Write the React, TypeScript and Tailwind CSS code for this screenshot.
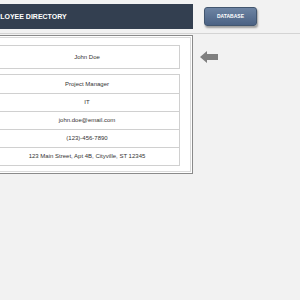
import React from "react";

const details = [
  "Project Manager",
  "IT",
  "john.doe@email.com",
  "(123)-456-7890",
  "123 Main Street, Apt 4B, Cityville, ST 12345",
];

function BackArrow() {
  return (
    <svg width="18" height="12" viewBox="0 0 18 12" className="block">
      <path d="M0 6 L7 0 L7 3 L18 3 L18 9 L7 9 L7 12 Z" fill="#7f7f7f" />
    </svg>
  );
}

export default function App() {
  return (
    <div className="h-[300px] w-[300px] overflow-hidden bg-[#f2f2f2] font-['Liberation_Sans',Arial,sans-serif]">
      <div className="-ml-[19px] flex pt-[4px]">
        <div className="flex h-[25px] w-[212px] items-center bg-[#333f50] pl-[4px]">
          <span className="text-[7px] font-bold leading-none text-white">
            EMPLOYEE DIRECTORY
          </span>
        </div>
        <button className="ml-[11px] mt-[3px] flex h-[19px] w-[53px] items-center justify-center rounded-[3px] border border-[#42566f] bg-gradient-to-b from-[#6d84a3] to-[#4b6284] shadow-[1px_2px_2px_rgba(0,0,0,0.35)]">
          <span className="text-[5px] font-bold leading-none text-white">
            DATABASE
          </span>
        </button>
      </div>

      <div className="mt-[4px] h-px w-full bg-[#d4d4d4]" />

      <div className="-ml-[19px] mt-px flex items-start">
        <div className="h-[139px] w-[212px] border border-[#8a8a8a] bg-white p-px">
          <div className="h-full w-full border border-[#dadada] px-[10px] pt-[7px]">
            <div className="flex h-[24px] items-center justify-center border border-[#d0d0d0] text-[6px] text-[#333333]">
              John Doe
            </div>
            <div className="mt-[5px] border border-[#d0d0d0]">
              {details.map((d, i) => (
                <div
                  key={d}
                  className={`flex h-[18px] items-center justify-center text-[6px] text-[#333333] ${
                    i > 0 ? "border-t border-[#d0d0d0]" : ""
                  }`}
                >
                  {d}
                </div>
              ))}
            </div>
          </div>
        </div>
        <div className="ml-[7px] mt-[16px]">
          <BackArrow />
        </div>
      </div>
    </div>
  );
}
